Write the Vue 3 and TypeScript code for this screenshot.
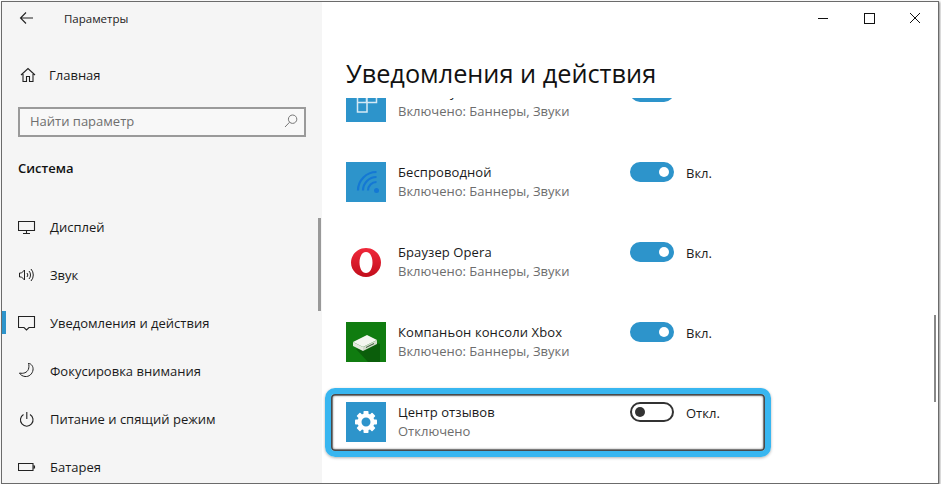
<script setup lang="ts">
interface Row { name: string; sub: string; on: boolean; icon: string }
const rows: Row[] = [
  { name: 'Автозапуск', sub: 'Включено: Баннеры, Звуки', on: true, icon: 'tiles' },
  { name: 'Беспроводной', sub: 'Включено: Баннеры, Звуки', on: true, icon: 'wifi' },
  { name: 'Браузер Opera', sub: 'Включено: Баннеры, Звуки', on: true, icon: 'opera' },
  { name: 'Компаньон консоли Xbox', sub: 'Включено: Баннеры, Звуки', on: true, icon: 'xbox' },
  { name: 'Центр отзывов', sub: 'Отключено', on: false, icon: 'gear' },
]
const nav = [
  { label: 'Дисплей', icon: 'display' },
  { label: 'Звук', icon: 'sound' },
  { label: 'Уведомления и действия', icon: 'notify', active: true },
  { label: 'Фокусировка внимания', icon: 'moon' },
  { label: 'Питание и спящий режим', icon: 'power' },
  { label: 'Батарея', icon: 'battery' },
]
const gearTeeth = [0, 45, 90, 135, 180, 225, 270, 315]
</script>

<template>
  <div class="window">
    <aside class="side">
      <div class="titlebar">
        <svg class="back" width="16" height="14" viewBox="0 0 16 14"><path d="M14 7H1.500M7 1.500 1.500 7 7 12.500" fill="none" stroke="#222" stroke-width="1.100"/></svg>
        <span class="apptitle">Параметры</span>
      </div>
      <div class="home">
        <svg class="navicon" width="16" height="16" viewBox="0 0 16 16"><path d="M1 8 8 1.500 15 8M3 7v7.500h3.500V9.500h3v5H13V7" fill="none" stroke="#222" stroke-width="1.100"/></svg>
        <span>Главная</span>
      </div>
      <div class="search">
        <span>Найти параметр</span>
        <svg width="14" height="14" viewBox="0 0 14 14"><circle cx="8.600" cy="5.200" r="4.200" fill="none" stroke="#777" stroke-width="1"/><path d="M5.600 8.200 1 13" stroke="#777" stroke-width="1"/></svg>
      </div>
      <div class="section">Система</div>
      <nav class="nav">
        <div v-for="n in nav" :key="n.label" class="navitem" :class="{ active: n.active }">
          <svg class="navicon" width="18" height="16" viewBox="0 0 18 16">
            <template v-if="n.icon === 'display'"><path d="M.500 2.500h16v9H.500zM8.500 11.500v3M5 14.500h7" fill="none" stroke="#222" stroke-width="1.100"/></template>
            <template v-else-if="n.icon === 'sound'"><path d="M1.500 6v4h2l3 3V3l-3 3zM9 6a3 3 0 0 1 0 4M11 4a6 6 0 0 1 0 8M13 2a9 9 0 0 1 0 12" fill="none" stroke="#222" stroke-width="1"/></template>
            <template v-else-if="n.icon === 'notify'"><path d="M.500 1.500h16v11h-5.500l-2.500 2.500-2.500-2.500H.500z" fill="none" stroke="#222" stroke-width="1.100"/></template>
            <template v-else-if="n.icon === 'moon'"><path d="M10.500 0c3 1 5 3.500 4.500 7-.6 4-4 7-8 6.500-2.500-.3-4.500-1.500-5.500-3.500 4 1 7.500-.5 8.800-3.500.8-2 .8-4.500.2-6.500z" fill="none" stroke="#222" stroke-width="1"/></template>
            <template v-else-if="n.icon === 'power'"><path d="M5.500 3.500a6.300 6.300 0 1 0 6.500 0M8.800 1v7" fill="none" stroke="#222" stroke-width="1.100"/></template>
            <template v-else><path d="M.500 4.500h14.500v7H.500zM15 7h1.500v2H15" fill="none" stroke="#222" stroke-width="1.100"/></template>
          </svg>
          <span>{{ n.label }}</span>
        </div>
      </nav>
      <div class="side-scroll"></div>
    </aside>

    <main class="main">
      <div class="controls">
        <svg width="12" height="12" viewBox="0 0 12 12"><path d="M1 6.500h10" stroke="#111" stroke-width="1"/></svg>
        <svg width="12" height="12" viewBox="0 0 12 12"><rect x="1.500" y="1.500" width="10" height="10" fill="none" stroke="#111" stroke-width="1"/></svg>
        <svg width="12" height="12" viewBox="0 0 12 12"><path d="M1 1l10 10M11 1 1 11" stroke="#111" stroke-width="1"/></svg>
      </div>
      <h1>Уведомления и действия</h1>
      <div class="list">
        <div v-for="r in rows" :key="r.name" class="row">
          <div class="tile" :class="r.icon">
            <svg v-if="r.icon === 'tiles'" width="40" height="40" viewBox="0 0 40 40"><path d="M11.500 10.500h9v10h-9zM21 10.500h9.500v10H21zM11.500 20.500h9.500v9.500h-9.500z" fill="none" stroke="#d5e9f5" stroke-width="1.500"/></svg>
            <svg v-else-if="r.icon === 'wifi'" width="40" height="40" viewBox="0 0 40 40"><circle cx="30.500" cy="28.500" r="2.500" fill="#1478d4"/><path d="M22 28.500a8.500 8.500 0 0 1 8.500-8.500M17 28.500a13.500 13.500 0 0 1 13.500-13.500M12 28.500a18.500 18.500 0 0 1 18.500-18.500" fill="none" stroke="#1478d4" stroke-width="2.200"/></svg>
            <svg v-else-if="r.icon === 'opera'" width="40" height="40" viewBox="0 0 40 40">
              <defs><linearGradient id="operaFill" x1="0" y1="0" x2="0" y2="1"><stop offset="0" stop-color="#f0283a"/><stop offset="1" stop-color="#c20e1c"/></linearGradient></defs>
              <path fill-rule="evenodd" d="M20 6c8.300 0 15 6.500 15 14.500S28.300 35 20 35 5 28.500 5 20.500 11.700 6 20 6zm0 4c-4 0-6.500 4.700-6.500 10.500S16 31 20 31s6.500-4.700 6.500-10.500S24 10 20 10z" fill="url(#operaFill)"/>
            </svg>
            <svg v-else-if="r.icon === 'xbox'" width="40" height="40" viewBox="0 0 40 40">
              <path d="M10 27 31 21l3 1v18H22z" fill="#0b5e0b"/>
              <path d="M7 20 21 13l10 5-14 7z" fill="#f4f6f0"/>
              <path d="M7 20v4l10 5v-4z" fill="#e4e9de"/>
              <path d="M17 25v4l14-7v-4z" fill="#d2dacb"/>
              <path d="M20 25.500 28 21.500" stroke="#3a5a3a" stroke-width="1"/>
            </svg>
            <svg v-else width="40" height="40" viewBox="0 0 40 40">
              <g fill="#fff"><rect v-for="a in gearTeeth" :key="a" x="17.500" y="9" width="5" height="4" rx=".8" :transform="`rotate(${a} 20 20)`"/></g>
              <circle cx="20" cy="20" r="6.500" fill="none" stroke="#fff" stroke-width="4"/>
            </svg>
          </div>
          <div class="info">
            <div class="name">{{ r.name }}</div>
            <div class="sub">{{ r.sub }}</div>
          </div>
          <div class="toggle" :class="{ on: r.on }"><span class="knob"></span></div>
          <div class="state">{{ r.on ? 'Вкл.' : 'Откл.' }}</div>
          <div v-if="!r.on" class="callout"></div>
        </div>
      </div>
      <div class="main-scroll"></div>
    </main>
  </div>
</template>

<style>
html, body { margin: 0; background: #fff; }
</style>

<style scoped>
.window {
  box-sizing: border-box;
  width: 938px;
  height: 483px;
  margin: 1px 0 0 1px;
  display: flex;
  border: 1px solid #6b6b6b;
  box-shadow: 1px 1px 2px rgba(0,0,0,.45);
  background: #fff;
  overflow: hidden;
  font-family: "Open Sans", "Noto Sans", sans-serif;
  color: #1a1a1a;
  font-size: 13px;
  position: relative;
}
.side {
  width: 320px;
  flex: none;
  background: #f5f5f5;
  position: relative;
  height: 100%;
}
.titlebar { display: flex; align-items: center; height: 32px; padding-left: 17px; }
.back { margin-right: 29px; }
.apptitle { font-size: 11.500px; color: #222; }
.home { display: flex; align-items: center; height: 24px; margin-top: 29px; padding-left: 18px; }
.home span { margin-left: 13px; }
.search {
  box-sizing: border-box;
  margin: 20px 0 0 16px;
  width: 288px;
  height: 30px;
  border: 2px solid #9a9a9a;
  background: #f8f8f8;
  display: flex;
  align-items: center;
  justify-content: space-between;
  padding: 0 6px 2px 10px;
  color: #6e6e6e;
}
.section { margin: 21px 0 0 16px; height: 20px; line-height: 20px; font-weight: 600; font-size: 13px; color: #111; }
.nav { margin-top: 25px; }
.navitem {
  display: flex;
  align-items: center;
  height: 48px;
  padding-left: 16px;
  position: relative;
}
.navitem span { margin-left: 14px; }
.navitem.active::before {
  content: "";
  position: absolute;
  left: 0;
  top: 12px;
  width: 4px;
  height: 23px;
  background: #2d94cb;
}
.side-scroll {
  position: absolute;
  right: 1px;
  top: 216px;
  width: 3px;
  height: 93px;
  background: #999;
}
.main { flex: 1; position: relative; min-width: 0; height: 100%; }
.controls {
  position: absolute;
  top: 10px;
  right: 0;
  display: flex;
  gap: 34px;
  padding-right: 17px;
  align-items: center;
}
h1 {
  margin: 0 0 3px;
  padding: 49px 0 0 24px;
  height: 44px;
  line-height: 44px;
  font-size: 25.300px;
  font-weight: 400;
  color: #111;
}
.list { height: 384px; overflow: hidden; position: relative; }
.row {
  height: 80px;
  display: flex;
  align-items: flex-start;
  position: relative;
  padding-left: 24px;
  box-sizing: border-box;
}
.row:first-child { margin-top: -16px; }
.tile { width: 40px; height: 40px; flex: none; background: #2d94cb; overflow: hidden; }
.tile.opera { background: transparent; }
.tile.xbox { background: #107c10; }
.tile svg { display: block; }
.info { width: 232px; margin-left: 12px; }
.name { font-size: 13px; line-height: 20px; color: #1a1a1a; letter-spacing: .1px; }
.sub { font-size: 13px; line-height: 20px; color: #6d6d6d; margin-top: -1px; }
.toggle {
  box-sizing: border-box;
  width: 44px;
  height: 20px;
  border-radius: 10px;
  border: 2px solid #333;
  display: flex;
  align-items: center;
  padding: 0 3px;
}
.toggle.on { background: #2d94cb; border-color: #2d94cb; justify-content: flex-end; }
.knob { width: 10px; height: 10px; border-radius: 50%; background: #333; }
.toggle.on .knob { background: #fff; }
.state { margin-left: 12px; line-height: 20px; font-size: 13px; padding-top: 1px; }
.callout {
  position: absolute;
  left: 3px;
  top: -14px;
  width: 446px;
  height: 69px;
  box-sizing: border-box;
  border: 6px solid #38b6f0;
  border-radius: 10px;
  box-shadow: inset 0 0 0 1.500px #4a4a4a, inset 0 0 2px 2px rgba(70,70,70,.6), 0 1px 3px rgba(0,0,0,.3);
  pointer-events: none;
}
.main-scroll {
  position: absolute;
  right: 2px;
  top: 313px;
  width: 2px;
  height: 87px;
  background: #888;
}
</style>
